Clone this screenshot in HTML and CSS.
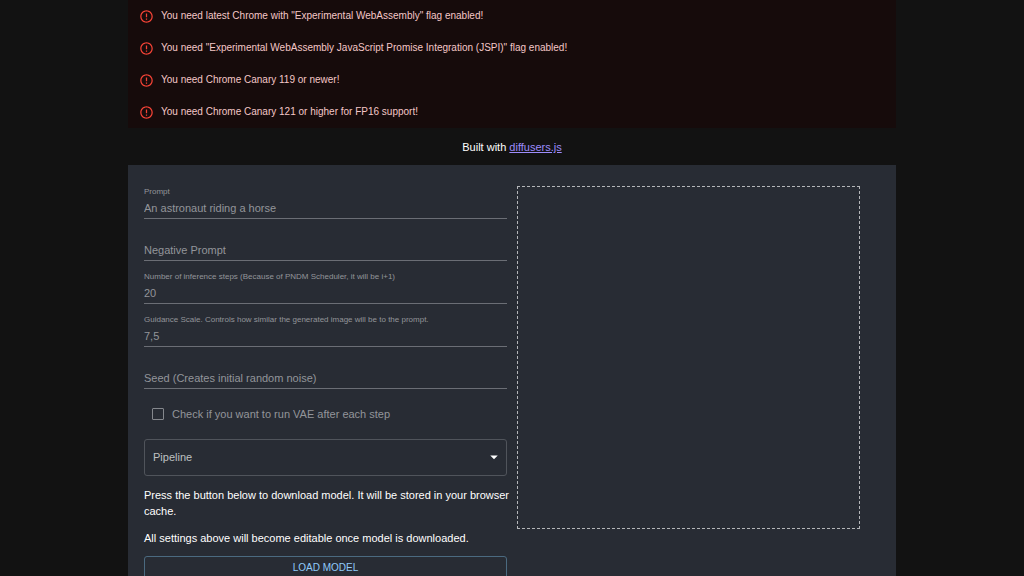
FILE: index.html
```html
<!DOCTYPE html>
<html lang="en">
<head>
    <meta charset="UTF-8">
    <meta name="viewport" content="width=device-width, initial-scale=1.0">
    <title>Stable Diffusion</title>
    <link rel="stylesheet" href="styles.css">
</head>
<body>
    <svg width="0" height="0" class="sprite" aria-hidden="true">
        <symbol id="icon-error" viewBox="0 0 24 24">
            <path d="M11 15h2v2h-2zm0-8h2v6h-2zm.99-5C6.47 2 2 6.48 2 12s4.47 10 9.99 10C17.52 22 22 17.52 22 12S17.52 2 11.99 2zM12 20c-4.42 0-8-3.58-8-8s3.58-8 8-8 8 3.58 8 8-3.58 8-8 8z"/>
        </symbol>
    </svg>
    <div class="container">
        <div class="alert" role="alert">
            <svg class="alert-icon"><use href="#icon-error"/></svg>
            <span>You need latest Chrome with "Experimental WebAssembly" flag enabled!</span>
        </div>
        <div class="alert" role="alert">
            <svg class="alert-icon"><use href="#icon-error"/></svg>
            <span>You need "Experimental WebAssembly JavaScript Promise Integration (JSPI)" flag enabled!</span>
        </div>
        <div class="alert" role="alert">
            <svg class="alert-icon"><use href="#icon-error"/></svg>
            <span>You need Chrome Canary 119 or newer!</span>
        </div>
        <div class="alert" role="alert">
            <svg class="alert-icon"><use href="#icon-error"/></svg>
            <span>You need Chrome Canary 121 or higher for FP16 support!</span>
        </div>

        <p class="built-with">Built with <a href="https://github.com/dakenf/diffusers.js">diffusers.js</a></p>

        <main class="panel">
            <form class="settings">
                <div class="field">
                    <label for="prompt">Prompt</label>
                    <input type="text" id="prompt" value="An astronaut riding a horse" disabled>
                </div>
                <div class="field empty">
                    <label for="negativePrompt">Negative Prompt</label>
                    <input type="text" id="negativePrompt" disabled>
                </div>
                <div class="field">
                    <label for="steps">Number of inference steps (Because of PNDM Scheduler, it will be i+1)</label>
                    <input type="text" id="steps" value="20" disabled>
                </div>
                <div class="field">
                    <label for="guidance">Guidance Scale. Controls how similar the generated image will be to the prompt.</label>
                    <input type="text" id="guidance" value="7,5" disabled>
                </div>
                <div class="field empty">
                    <label for="seed">Seed (Creates initial random noise)</label>
                    <input type="text" id="seed" disabled>
                </div>
                <div class="check-row">
                    <input type="checkbox" id="runVae" disabled>
                    <label for="runVae">Check if you want to run VAE after each step</label>
                </div>
                <div class="select-box">
                    <select id="pipeline" aria-label="Pipeline">
                        <option>Pipeline</option>
                    </select>
                    <svg class="arrow" viewBox="0 0 24 24" aria-hidden="true"><path d="M7 10l5 5 5-5z"/></svg>
                </div>
                <p>Press the button below to download model. It will be stored in your browser cache.</p>
                <p>All settings above will become editable once model is downloaded.</p>
                <button type="button" class="load-button">LOAD MODEL</button>
            </form>
            <div class="output">
                <canvas class="result"></canvas>
            </div>
        </main>
    </div>
</body>
</html>
```
FILE: styles.css
```css
* {
    box-sizing: border-box;
}
body {
    margin: 0;
    background-color: #121212;
    color: #fff;
    font-family: "Liberation Sans", Arial, sans-serif;
    font-size: 11px;
    line-height: 16px;
}
input, select, button {
    font: inherit;
}
.sprite {
    display: block;
}
.container {
    width: 75%;
    margin: 0 auto;
}
.alert {
    display: flex;
    align-items: center;
    gap: 7px;
    padding: 8px 11px;
    background-color: #160b0b;
    color: #f4c7c7;
    font-size: 10px;
}
.alert-icon {
    width: 15px;
    height: 15px;
    fill: #f44336;
}
.built-with {
    margin: 11px 0 10px;
    text-align: center;
}
.built-with a {
    color: #9e8cfc;
}
.panel {
    display: grid;
    grid-template-columns: 1fr 1fr;
    gap: 10px;
    padding: 11px 16px 21px;
    background-color: #282c34;
}
.field {
    position: relative;
    padding-top: 10px;
}
.field label {
    display: block;
    margin-bottom: 3px;
    color: #93959a;
    font-size: 8px;
    line-height: 11px;
}
.field input {
    display: block;
    width: 100%;
    height: 19px;
    padding: 0 0 3px;
    border: 0;
    border-bottom: 1px solid #6b6e75;
    border-radius: 0;
    background: none;
    color: #93959a;
}
/* label rests on the line while the field has no value */
.field.empty {
    padding-top: 23px;
}
.field.empty label {
    position: absolute;
    bottom: 3px;
    margin: 0;
    font-size: 11px;
    line-height: 16px;
}
.check-row {
    display: flex;
    align-items: center;
    gap: 8px;
    padding: 17px 8px 17px;
    color: #93959a;
}
.check-row input {
    appearance: none;
    width: 12px;
    height: 12px;
    margin: 0;
    border: 1px solid #85888d;
    border-radius: 1px;
}
.select-box {
    position: relative;
}
.select-box select {
    appearance: none;
    display: block;
    width: 100%;
    height: 37px;
    padding: 0 8px 2px;
    border: 1px solid #50545b;
    border-radius: 3px;
    background: none;
    color: #bec0c2;
}
.arrow {
    position: absolute;
    top: 9px;
    right: 4px;
    width: 18px;
    height: 18px;
    fill: #fff;
    pointer-events: none;
}
/* text may run slightly into the column gap */
.settings p {
    margin: 11px -4px 10px 0;
}
.load-button {
    display: block;
    width: 100%;
    height: 24px;
    padding: 0;
    border: 1px solid #4b6a80;
    border-radius: 3px;
    background: none;
    color: #90caf9;
    font-size: 10px;
    cursor: pointer;
}
.output {
    padding-top: 10px;
}
.result {
    display: block;
    width: 343px;
    max-width: 100%;
    aspect-ratio: 1;
    border: 1px dashed #b4b6b9;
}
```
